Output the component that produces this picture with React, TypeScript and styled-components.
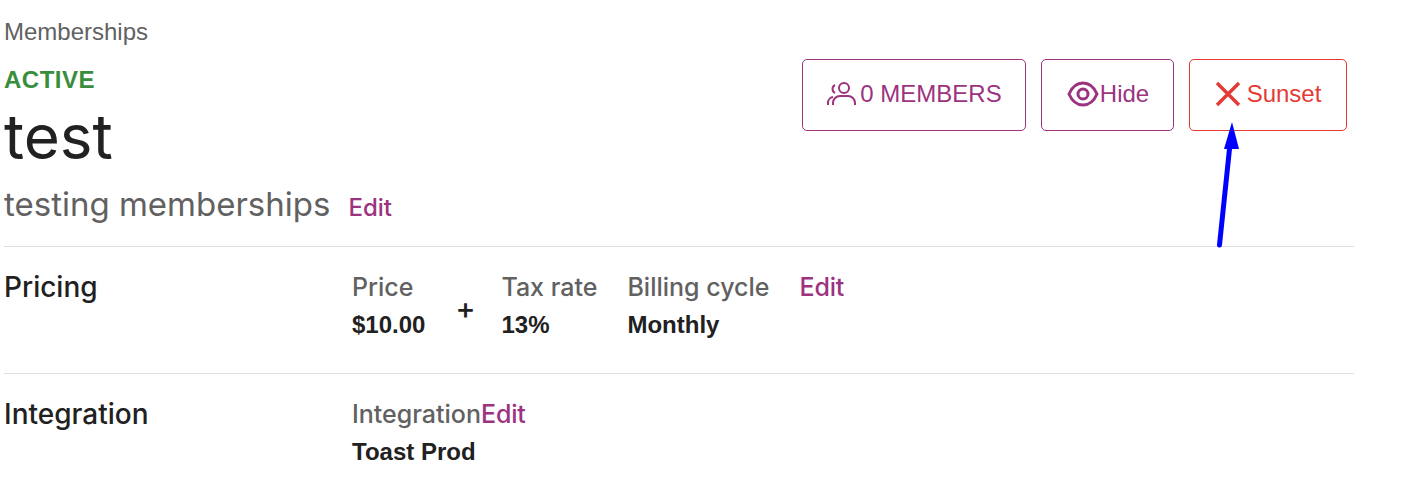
import * as React from 'react';
import styled, { createGlobalStyle } from 'styled-components';

const GlobalStyle = createGlobalStyle`
  html, body {
    margin: 0;
    background: #fff;
    font-family: 'Inter', sans-serif;
    color: #212121;
  }
`;

const Page = styled.div`
  position: relative;
  width: 1350px;
  height: 492px;
  margin-left: 4px;
  overflow: hidden;
`;

const Crumb = styled.div`
  font-family: 'Liberation Sans', Arial, sans-serif;
  font-size: 24px;
  line-height: 28px;
  color: #616161;
  padding-top: 18px;
`;

const Header = styled.div`
  display: flex;
  justify-content: space-between;
  align-items: flex-start;
  height: 201px;
  border-bottom: 1px solid #e0e0e0;
  box-sizing: border-box;
`;

const TitleBlock = styled.div`
  display: flex;
  flex-direction: column;
`;

const Status = styled.div`
  font-family: 'Liberation Sans', Arial, sans-serif;
  font-weight: 700;
  font-size: 24px;
  letter-spacing: 0.5px;
  line-height: 28px;
  color: #388e3c;
  margin-top: 20px;
`;

const Title = styled.h1`
  margin: 7px 0 0;
  font-weight: 400;
  font-size: 62px;
  line-height: 72px;
  color: #212121;
`;

const SubRow = styled.div`
  display: flex;
  align-items: baseline;
  gap: 18px;
  margin-top: 11px;
`;

const Subtitle = styled.span`
  font-size: 33px;
  line-height: 40px;
  color: #616161;
`;

const EditLink = styled.a`
  font-size: 24px;
  font-weight: 500;
  line-height: 28px;
  color: #9c337f;
`;

const Actions = styled.div`
  display: flex;
  gap: 15px;
  margin-top: 13px;
  margin-right: 7px;
`;

const ActionButton = styled.button<{ $danger?: boolean; $w: number }>`
  display: flex;
  align-items: center;
  justify-content: center;
  width: ${(p) => p.$w}px;
  height: 72px;
  padding: 0 0 2px;
  background: #fff;
  border: 1px solid ${(p) => (p.$danger ? '#e53935' : '#9c337f')};
  border-radius: 5px;
  color: ${(p) => (p.$danger ? '#e53935' : '#9c337f')};
  font-family: 'Liberation Sans', Arial, sans-serif;
  font-size: 24px;
  svg { flex: none; }
`;

const Section = styled.section<{ $h: number }>`
  display: grid;
  grid-template-columns: 348px 1fr;
  height: ${(p) => p.$h}px;
  box-sizing: border-box;
  padding-top: 23px;
`;

const SectionTitle = styled.h2`
  margin: 0;
  font-size: 28px;
  font-weight: 500;
  line-height: 34px;
  color: #212121;
`;

const Divider = styled.div`
  height: 1px;
  background: #e0e0e0;
`;

const Fields = styled.div`
  display: flex;
  align-items: flex-start;
`;

const Field = styled.div<{ $mr?: number }>`
  margin-right: ${(p) => p.$mr ?? 0}px;
`;

const Label = styled.div`
  font-size: 25px;
  font-weight: 500;
  line-height: 34px;
  color: #616161;
`;

const Value = styled.div`
  font-family: 'Liberation Sans', Arial, sans-serif;
  font-size: 24px;
  font-weight: 700;
  line-height: 34px;
  margin-top: 4px;
  color: #212121;
`;

const Plus = styled.div`
  font-size: 30px;
  font-weight: 500;
  line-height: 34px;
  margin: 21px 26px 0 30px;
`;

const InlineEdit = styled(EditLink)`
  font-size: 25px;
  letter-spacing: -0.2px;
  line-height: 34px;
`;

const Arrow = styled.svg`
  position: absolute;
  left: 1205px;
  top: 120px;
`;

export default function App() {
  return (
    <Page>
      <GlobalStyle />
      <Crumb>Memberships</Crumb>
      <Header>
        <TitleBlock>
          <Status>ACTIVE</Status>
          <Title>test</Title>
          <SubRow>
            <Subtitle>testing memberships</Subtitle>
            <EditLink>Edit</EditLink>
          </SubRow>
        </TitleBlock>
        <Actions>
          <ActionButton $w={224}>
            <svg width="34" height="26" viewBox="0 0 34 26" fill="none" stroke="currentColor" strokeWidth="2">
              <circle cx="18" cy="7" r="5" />
              <path d="M7 24v-2a7 7 0 0 1 7-7h8a7 7 0 0 1 7 7v2" />
              <path d="M9 4a4.5 4.5 0 0 0 0 8" />
              <path d="M2 24v-2a6 6 0 0 1 5-6" />
            </svg>
            0 MEMBERS
          </ActionButton>
          <ActionButton $w={133}>
            <svg width="34" height="26" viewBox="0 0 34 26" fill="none" stroke="currentColor" strokeWidth="3">
              <path d="M3 13C6 6 11 2 17 2S28 6 31 13c-3 7-8 11-14 11S6 20 3 13z" />
              <circle cx="17" cy="13" r="5" />
            </svg>
            Hide
          </ActionButton>
          <ActionButton $danger $w={158}>
            <svg width="26" height="26" viewBox="0 0 26 26" fill="none" stroke="currentColor" strokeWidth="3.4" style={{ marginRight: 6 }}>
              <path d="M2 2l22 22M24 2L2 24" />
            </svg>
            Sunset
          </ActionButton>
        </Actions>
      </Header>
      <Section $h={126}>
        <SectionTitle>Pricing</SectionTitle>
        <Fields>
          <Field>
            <Label>Price</Label>
            <Value>$10.00</Value>
          </Field>
          <Plus>+</Plus>
          <Field $mr={30}>
            <Label>Tax rate</Label>
            <Value>13%</Value>
          </Field>
          <Field $mr={30}>
            <Label>Billing cycle</Label>
            <Value>Monthly</Value>
          </Field>
          <InlineEdit>Edit</InlineEdit>
        </Fields>
      </Section>
      <Divider />
      <Section $h={118}>
        <SectionTitle>Integration</SectionTitle>
        <Fields>
          <Field>
            <Label>Integration</Label>
            <Value>Toast Prod</Value>
          </Field>
          <InlineEdit>Edit</InlineEdit>
        </Fields>
      </Section>
      <Arrow width="40" height="130" viewBox="0 0 40 130">
        <path d="M10.500 125L21 24" stroke="#0000ff" strokeWidth="5" strokeLinecap="round" />
        <path d="M23 2l7 27H15z" fill="#0000ff" />
      </Arrow>
    </Page>
  );
}
